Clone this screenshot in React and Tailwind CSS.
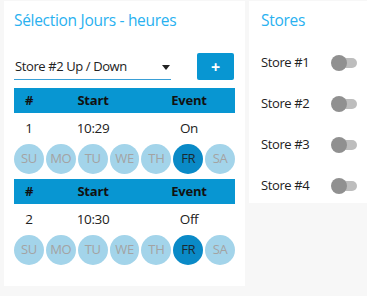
import { useState } from 'react';

const DAYS = ['SU', 'MO', 'TU', 'WE', 'TH', 'FR', 'SA'];

const schedules = [
  { id: 1, start: '10:29', event: 'On', days: ['FR'] },
  { id: 2, start: '10:30', event: 'Off', days: ['FR'] },
];

const Toggle = () => (
  <div className="relative w-[26px] h-[16px]">
    <div className="absolute left-[4px] right-0 top-[3px] h-[10px] rounded-full bg-[#bdbdbd]" />
    <div className="absolute left-0 top-0 w-[16px] h-[16px] rounded-full bg-[#909090]" />
  </div>
);

const App = () => {
  const [store] = useState('Store #2 Up / Down');

  return (
    <div
      className="w-[367px] h-[296px] bg-[#f7f7f7] flex gap-[4px] pl-[4px] pt-[1px] overflow-hidden"
      style={{ fontFamily: '"Open Sans", "Noto Sans", sans-serif' }}
    >
      {/* Schedule card */}
      <div className="w-[241px] h-[285px] bg-white px-[10px] pt-[7px] shrink-0">
        <h1 className="text-[15.5px] leading-[24px] text-[#29b1f0] tracking-[-0.3px]">Sélection Jours - heures</h1>

        <div className="flex items-end justify-between mt-[20px] h-[28px]">
          <div className="w-[157px] h-[25px] border-b border-[#3a9fd6] flex items-center justify-between pl-[1px] pr-[1px]">
            <span className="text-[13px] text-[#222] tracking-[-0.4px]">{store}</span>
            <span className="w-0 h-0 border-l-[4px] border-r-[4px] border-t-[5px] border-l-transparent border-r-transparent border-t-[#222]" />
          </div>
          <button className="w-[37px] h-[27px] mr-[1px] rounded-[2px] bg-[#0896d2] text-white text-[16px] font-bold leading-none flex items-center justify-center">
            +
          </button>
        </div>

        {schedules.map((s, i) => (
          <div key={s.id} className={i === 0 ? 'mt-[8px]' : 'mt-[5px]'}>
            <div className="h-[25px] bg-[#0896d2] grid grid-cols-[30px_98px_94px] items-center text-[13px] font-bold text-[#111] tracking-[-0.2px]">
              <span className="text-center">#</span>
              <span className="text-center">Start</span>
              <span className="text-center">Event</span>
            </div>
            <div className="h-[31px] grid grid-cols-[30px_98px_94px] items-center text-[13.5px] text-[#222] tracking-[-0.4px]">
              <span className="text-center">{s.id}</span>
              <span className="text-center">{s.start}</span>
              <span className="text-center">{s.event}</span>
            </div>
            <div className="flex gap-[2px]">
              {DAYS.map((d) => {
                const on = s.days.includes(d);
                return (
                  <div
                    key={d}
                    className={
                      'w-[30px] h-[30px] rounded-full flex items-center justify-center text-[13px] tracking-[-0.3px] ' +
                      (on ? 'bg-[#0a8ac7] text-[#1a2a33]' : 'bg-[#a3d4ea] text-[#a3a3a3]')
                    }
                  >
                    {d}
                  </div>
                );
              })}
            </div>
          </div>
        ))}
      </div>

      {/* Stores card */}
      <div className="flex-1 h-[202px] bg-white pl-[12px] pt-[7px]">
        <h2 className="text-[15.5px] leading-[24px] text-[#29b1f0] tracking-[-0.3px]">Stores</h2>
        <div className="mt-[23px] flex flex-col gap-[25px]">
          {[1, 2, 3, 4].map((n) => (
            <div key={n} className="flex items-center justify-between pr-[10px] h-[16px]">
              <span className="text-[13px] text-[#222] tracking-[-0.4px]">Store #{n}</span>
              <Toggle />
            </div>
          ))}
        </div>
      </div>
    </div>
  );
};

export default App;
